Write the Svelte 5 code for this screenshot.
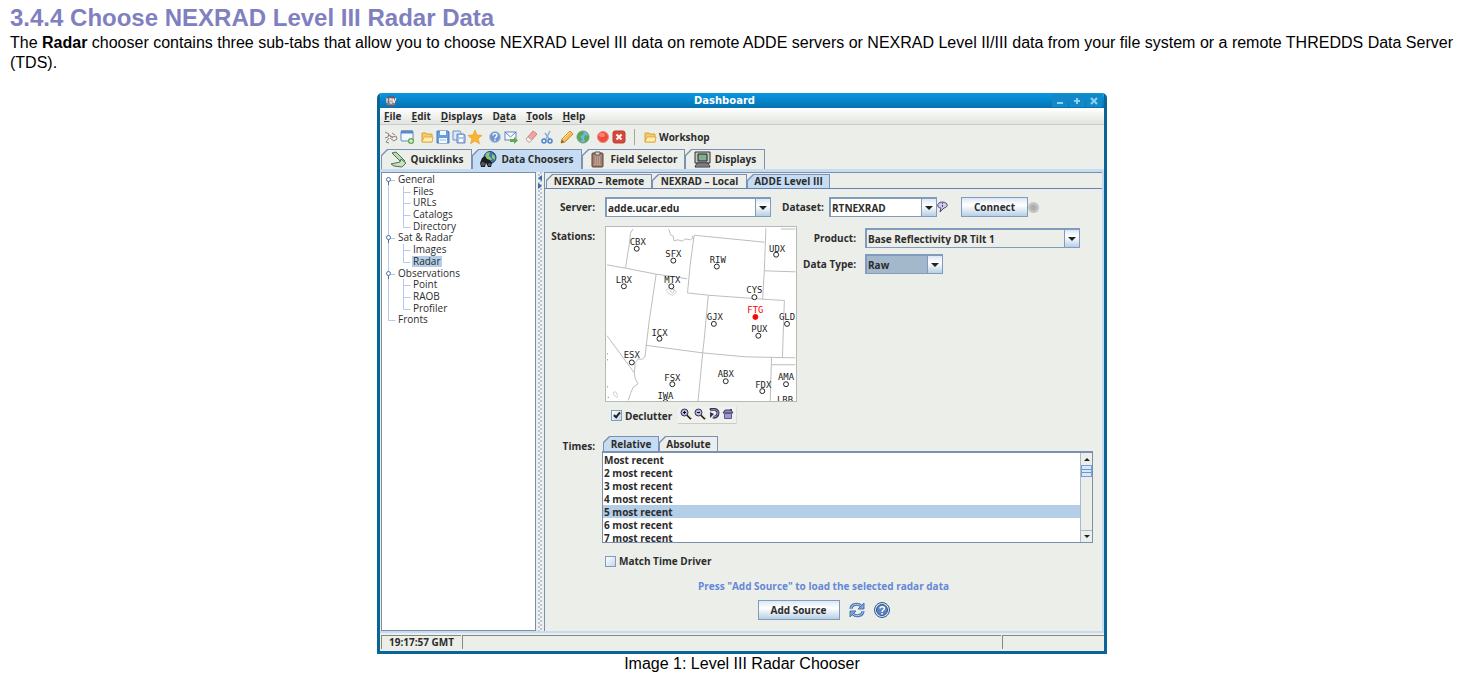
<script lang="ts">
  const menus = [
    ["", "F", "ile"],
    ["", "E", "dit"],
    ["", "D", "isplays"],
    ["D", "a", "ta"],
    ["", "T", "ools"],
    ["", "H", "elp"],
  ];

  const toolGroups = [
    ["satellite", "window"],
    ["open", "save", "saveas", "star"],
    ["help", "export"],
    ["eraser", "cut"],
    ["pencil", "globe"],
    ["record", "exit"],
  ];

  const mainTabs = [
    { icon: "links", label: "Quicklinks" },
    { icon: "choosers", label: "Data Choosers" },
    { icon: "clipboard", label: "Field Selector" },
    { icon: "monitor", label: "Displays" },
  ];

  const tree = [
    { label: "General", kind: "parent", first: true },
    { label: "Files", kind: "child" },
    { label: "URLs", kind: "child" },
    { label: "Catalogs", kind: "child" },
    { label: "Directory", kind: "child", last: true },
    { label: "Sat & Radar", kind: "parent" },
    { label: "Images", kind: "child" },
    { label: "Radar", kind: "child", last: true },
    { label: "Observations", kind: "parent" },
    { label: "Point", kind: "child" },
    { label: "RAOB", kind: "child" },
    { label: "Profiler", kind: "child", last: true },
    { label: "Fronts", kind: "leaf" },
  ];

  // label x/y, then marker x/y
  const stations: [string, number, number, number, number][] = [
    ["CBX", 32, 18, 31, 22],
    ["SFX", 68, 30, 68, 34],
    ["RIW", 113, 36, 112, 40],
    ["UDX", 173, 25, 172, 28],
    ["LRX", 18, 57, 18, 60],
    ["MTX", 67, 57, 66, 60],
    ["CYS", 150, 67, 150, 71],
    ["FTG", 151, 87, 151, 91],
    ["GJX", 110, 94, 109, 98],
    ["GLD", 183, 94, 183, 98],
    ["PUX", 155, 106, 154, 110],
    ["ICX", 54, 110, 54, 113],
    ["ESX", 26, 133, 26, 137],
    ["FSX", 67, 156, 67, 159],
    ["ABX", 121, 152, 121, 156],
    ["FDX", 159, 163, 158, 166],
    ["AMA", 182, 155, 182, 159],
    ["IWA", 60, 174, 60, 177],
    ["LBB", 181, 178, 181, 182],
  ];

  const times = [
    "Most recent",
    "2 most recent",
    "3 most recent",
    "4 most recent",
    "5 most recent",
    "6 most recent",
    "7 most recent",
  ];

  let activeTab = $state("Data Choosers");
  let activeChooser = $state("ADDE Level III");
  let activeNode = $state("Radar");
  let timeMode = $state("Relative");
  let selectedTime = $state("5 most recent");
  let station = $state("FTG");
  let declutter = $state(true);
  let matchDriver = $state(false);
</script>

{#snippet arrow()}
  <span class="arrow">
    <svg width="8" height="4" viewBox="0 0 8 4"><path d="M0 0h8L4 4z" fill="#222" /></svg>
  </span>
{/snippet}

{#snippet toolIcon(name: string)}
  <svg width="14" height="14" viewBox="0 0 14 14" fill="none">
    {#if name === "satellite"}
      <path d="M1 2l4 2-1 3-3 1M4 5l5 2 3-1 1 3-3 2-4-3M5 8l-3 4 3 1M8 3l3 2" stroke="#858585" />
      <path d="M6 6l3 2" stroke="#c66" />
    {:else if name === "window"}
      <rect x="1" y="1" width="12" height="10" rx="1" fill="#f4f8ff" stroke="#5d88c6" />
      <path d="M1 2h12" stroke="#5d88c6" stroke-width="3" />
      <circle cx="11" cy="11" r="3" fill="#5fa64c" />
      <path d="M9 11h4M11 9v4" stroke="#fff" />
    {:else if name === "open"}
      <path d="M2 3h4l1 1h5v8H2z" fill="#f6c96a" stroke="#dca23c" />
      <path d="M4 7h9l-1 5H2z" fill="#fff1b4" stroke="#e3ad43" />
    {:else if name === "save"}
      <path d="M1 1h11l1 1v11H1z" fill="#6a9ce0" stroke="#4a78bd" />
      <path d="M4 1h6v4H4zM3 8h8v5H3z" fill="#f4f8ff" />
      <path d="M4 10h6" stroke="#9bb7de" />
    {:else if name === "saveas"}
      <path d="M1 1h7l1 2v7H1z" fill="#dfe9fa" stroke="#6d90c8" />
      <path d="M5 4h7l1 1v8H5z" fill="#a9c4ec" stroke="#6587bf" />
      <path d="M7 5h4v2H7zM7 9h4v3H7z" fill="#fff" />
    {:else if name === "star"}
      <path d="M7 0l2 5 5 .4-4 3.3 1.5 5L7 11l-4.500 2.700L4 8.700 0 5.400 5 5z" fill="#f9b52e" stroke="#e8951c" stroke-width=".6" />
    {:else if name === "help"}
      <circle cx="7" cy="7" r="5.500" fill="#6f95cc" stroke="#b4c6e2" />
      <path d="M5 5.500C5 3 9 3 9 5.500 9 7 7 6.800 7 8.500M7 9.500V11" stroke="#fff" stroke-width="1.300" />
    {:else if name === "export"}
      <rect x="1" y="2" width="11" height="8" fill="#f5f8ff" stroke="#6485ba" />
      <path d="M1 2l5.500 5L12 2" stroke="#6485ba" />
      <path d="M6 9h4V7l4 3.500-4 3.500v-2H6z" fill="#62aa50" />
    {:else if name === "eraser"}
      <path d="M9 1l4 3-7 8-4-3z" fill="#f1a5a5" stroke="#d57d7d" />
      <path d="M4 7l4 3-2 2H4L2 9z" fill="#eee" stroke="#c6a9a9" />
    {:else if name === "cut"}
      <path d="M10 1L6 9M5 3l5 7" stroke="#8eaed5" stroke-width="1.500" />
      <circle cx="4" cy="11" r="2" stroke="#4b83cc" stroke-width="1.500" />
      <circle cx="10" cy="11" r="2" stroke="#4b83cc" stroke-width="1.500" />
    {:else if name === "pencil"}
      <path d="M10 1l3 3-8 8-4 1 1-4z" fill="#f8bc4d" stroke="#ce8b2b" />
      <path d="M3 9l7-7" stroke="#ffe6a4" />
      <path d="M1 13l1-3 2 2z" fill="#655" />
    {:else if name === "globe"}
      <circle cx="7" cy="7" r="6" fill="#7bb2df" stroke="#609a75" />
      <path d="M3 2l5 0-1 3-3 1 2 3-1 3-4-4zM9 5l4 1-1 5-3 1-1-4z" fill="#52ac50" />
    {:else if name === "record"}
      <circle cx="7" cy="7" r="5.500" fill="#f14b3d" stroke="#f2867c" />
      <ellipse cx="6" cy="5" rx="3" ry="2" fill="#f88377" />
    {:else if name === "exit"}
      <rect x="1" y="1" width="12" height="12" rx="2" fill="#d7483b" stroke="#bd3d33" />
      <path d="M4.500 4.500l5 5M9.500 4.500l-5 5" stroke="#fff" stroke-width="2" />
    {/if}
  </svg>
{/snippet}

{#snippet tabIcon(name: string)}
  <svg width="17" height="17" viewBox="0 0 17 17" fill="none">
    {#if name === "links"}
      <path d="M2 2l4-1 9 9-4 1z" fill="#b9dcb3" stroke="#50704f" />
      <path d="M1 13l9-2 1-3 5 4-4 4-8-1z" fill="#c6e2c1" stroke="#50704f" />
    {:else if name === "choosers"}
      <circle cx="10" cy="6.500" r="6" fill="#3b76b4" stroke="#23435e" />
      <path d="M6 2l4-1-1 4 3 3-3 3-4-5zM12 3l3 2v4l-3-2z" fill="#8cc474" />
      <path d="M2 7l3-2 2 3 3 1 2 3-1 4H8l-2-4-1 4H1L0 12z" fill="#1d1d20" />
      <circle cx="3" cy="13" r="2" fill="#53555e" />
      <circle cx="9.500" cy="13.500" r="1.500" fill="#4d5f66" />
    {:else if name === "clipboard"}
      <rect x="3" y="2" width="11" height="14" rx="1" fill="#a67b67" stroke="#5a4036" />
      <path d="M5 4h7v10H5z" fill="#bba193" />
      <path d="M5 6h7M5 8h7M5 10h7M5 12h7" stroke="#8d6b5d" stroke-dasharray="1 1" />
      <path d="M6 1h5v3H6z" fill="#d9d9d4" stroke="#555" />
    {:else if name === "monitor"}
      <path d="M1 1h15v11H1z" fill="#c8c8c4" stroke="#333" />
      <path d="M4 3h9v7H4z" fill="#7fae90" stroke="#222" />
      <path d="M3 12h11l2 4H1z" fill="#a9a2b3" stroke="#333" />
      <path d="M3 14h11" stroke="#555" />
    {/if}
  </svg>
{/snippet}

<main>
  <h1>3.4.4 Choose NEXRAD Level III Radar Data</h1>
  <p class="intro">
    The <b>Radar</b> chooser contains three sub-tabs that allow you to choose NEXRAD Level III data on
    remote ADDE servers or NEXRAD Level II/III data from your file system or a remote THREDDS Data
    Server (TDS).
  </p>

  <figure>
    <div class="window">
      <header class="titlebar">
        <svg class="logo" width="12" height="12" viewBox="0 0 12 12">
          <circle cx="6" cy="6" r="5.500" fill="#5c6474" />
          <path d="M1 5h10M2 9h8" stroke="#c69a84" stroke-width="1" />
          <path d="M2 3v5M5 3v5h2V4H5M8 3l1 5 2-5" stroke="#fff" fill="none" />
        </svg>
        <span class="title">Dashboard</span>
        <span class="controls">
          <button aria-label="Minimize"><svg width="8" height="8" viewBox="0 0 8 8"><path d="M1 6h6" /></svg></button>
          <button aria-label="Maximize"><svg width="8" height="8" viewBox="0 0 8 8"><path d="M1 4h6M4 1v6" /></svg></button>
          <button aria-label="Close"><svg width="8" height="8" viewBox="0 0 8 8"><path d="M1 1l6 6M7 1L1 7" /></svg></button>
        </span>
      </header>

      <nav class="menubar">
        {#each menus as [pre, key, post]}
          <button>{pre}<u>{key}</u>{post}</button>
        {/each}
      </nav>

      <div class="toolbar">
        {#each toolGroups as group}
          <div class="tool-group">
            {#each group as name}
              <button aria-label={name}>{@render toolIcon(name)}</button>
            {/each}
          </div>
        {/each}
        <span class="separator"></span>
        <button class="workshop">{@render toolIcon("open")}Workshop</button>
      </div>

      <div class="main-tabs">
        {#each mainTabs as tab}
          <button class="tab" class:active={activeTab === tab.label} onclick={() => (activeTab = tab.label)}>
            {@render tabIcon(tab.icon)}{tab.label}
          </button>
        {/each}
      </div>

      <div class="body">
        <div class="tree-panel">
          <ul class="tree">
            {#each tree as node}
              <li>
                <svg width={node.kind === "child" ? 30 : 15} height="12" viewBox="0 0 {node.kind === 'child' ? 30 : 15} 12" fill="none">
                  {#if node.kind === "parent"}
                    <path d={node.first ? "M6.500 6v6M8 6.500h5" : "M6.500 0v12M8 6.500h5"} stroke="#b3cbe8" />
                    <path d="M6.500 7v4" stroke="#4a6fae" />
                    <circle cx="6.500" cy="5.500" r="2" fill="#fff" stroke="#4a6fae" />
                  {:else if node.kind === "child"}
                    <path d="M6.500 0v12" stroke="#b3cbe8" />
                    <path d={node.last ? "M21.500 0v6.500h7" : "M21.500 0v12M21.500 6.500h7"} stroke="#b3cbe8" />
                  {:else}
                    <path d="M6.500 0v6.500h7" stroke="#b3cbe8" />
                  {/if}
                </svg>
                <button class:selected={activeNode === node.label} onclick={() => (activeNode = node.label)}>{node.label}</button>
              </li>
            {/each}
          </ul>
        </div>

        <div class="divider">
          <svg width="4" height="16" viewBox="0 0 4 16"><path d="M4 1v6L0 4zM0 9v6l4-3z" fill="#4468ac" /></svg>
        </div>

        <section class="chooser">
          <div class="sub-tabs">
            {#each ["NEXRAD – Remote", "NEXRAD – Local", "ADDE Level III"] as label}
              <button class="tab" class:active={activeChooser === label} onclick={() => (activeChooser = label)}>{label}</button>
            {/each}
          </div>

          <div class="form">
            <label class="name" for="server">Server:</label>
            <div class="row">
              <span class="combo server">
                <select id="server"><option>adde.ucar.edu</option></select>
                {@render arrow()}
              </span>
              <label for="dataset">Dataset:</label>
              <span class="combo dataset">
                <select id="dataset"><option>RTNEXRAD</option></select>
                {@render arrow()}
              </span>
              <svg class="bubble" width="11" height="12" viewBox="0 0 11 12">
                <path d="M5 1C0 1-1 7 4 7l-1 4 4-4c5-1 4-6-2-6z" fill="#cfc9ee" stroke="#4b4b61" />
                <path d="M5.500 2v1M5.500 4v2" stroke="#504b85" />
              </svg>
              <button class="push connect">Connect</button>
              <svg width="11" height="11" viewBox="0 0 11 11">
                <circle cx="5.500" cy="5.500" r="5.500" fill="#c4c4c2" />
                <circle cx="5.500" cy="5.500" r="3" fill="#adadab" />
              </svg>
            </div>

            <span class="name stations-name">Stations:</span>
            <div class="stations">
              <div>
                <svg class="map" width="192" height="176" viewBox="0 0 192 176">
                  <svg width="192" height="176" viewBox="15 18 576 528">
                    <g fill="none" stroke="#bcbcbc" stroke-width="3">
                      <path d="M97 24l-8 12-3 30-12 76M18 133l56 10 93 18 94 14M205 25l6 17 8 4 2 14 12-3 14 4 8-7 16 3 6-4v-8" />
                      <path d="M495 64L282 43l-12 92-8 83 63 7 164 12 67 4-6 175M500 22l-5 130-5 85M495 151l95 3M545 24h45" />
                      <path d="M167 161l-22 148-12 103-10 8-10-2-10 12-2 30M325 226l-12 130-5 45-8 85-6 60M135 377l173 23 130 12 151 3M517 414l-4 132M517 436h72M18 348l82 112 4 20 8 14-15 10-8 20-7 20" />
                      <path d="M197 190l14 8 10 12 8 4-12 12-12-6-8-10 12-12M205 206l12 14 6-14-14 4M36 520l8-2 6 12-3 6-8-8z" stroke-width="2" />
                      <path d="M18 403h3M18 421h3M18 503h3M20 535h3" stroke="#777" />
                    </g>
                  </svg>
                  {#each stations as [name, lx, ly, x, y]}
                    <g class="station" class:picked={station === name}>
                      <text x={lx} y={ly}>{name}</text>
                      <circle cx={x} cy={y} r="2.500" />
                    </g>
                  {/each}
                </svg>
                <div class="map-tools">
                  <label class="check"><input type="checkbox" bind:checked={declutter} />Declutter</label>
                  <div class="zoom-tools">
                    <button aria-label="Zoom in"><svg width="12" height="12" viewBox="0 0 12 12"><path d="M7 7l4 4" stroke="#222" stroke-width="2" /><path d="M8 7l3 3" stroke="#d7b258" /><circle cx="4.500" cy="4.500" r="3.500" fill="#b9b5df" stroke="#34344e" /><path d="M3 4.500h3M4.500 3v3" stroke="#111" /></svg></button>
                    <button aria-label="Zoom out"><svg width="12" height="12" viewBox="0 0 12 12"><path d="M7 7l4 4" stroke="#222" stroke-width="2" /><path d="M8 7l3 3" stroke="#d7b258" /><circle cx="4.500" cy="4.500" r="3.500" fill="#b9b5df" stroke="#34344e" /><path d="M3 4.500h3" stroke="#111" /></svg></button>
                    <button aria-label="Reset"><svg width="12" height="12" viewBox="0 0 12 12" fill="none"><path d="M2 2c4-2 8 0 8 3s-3 5-5 4" stroke="#34344e" stroke-width="3" /><path d="M3 2c4-1 7 0 7 3s-3 4-5 4" stroke="#a9a6d8" /><path d="M2 4l4 2-4 4z" fill="#34344e" /></svg></button>
                    <button aria-label="Home"><svg width="12" height="12" viewBox="0 0 12 12"><path d="M8 1h2v2H8z" fill="#3d3d5c" /><path d="M1 5l2-3h6l2 3z" fill="#8c8ac4" stroke="#3d3d5c" /><path d="M2.500 5.500h7v5h-7z" fill="#9d9bcd" stroke="#5a598c" /></svg></button>
                  </div>
                </div>
              </div>
              <div class="product-form">
                <label for="product">Product:</label>
                <span class="combo product">
                  <select id="product"><option>Base Reflectivity DR Tilt 1</option></select>
                  {@render arrow()}
                </span>
                <label for="datatype">Data Type:</label>
                <span class="combo datatype">
                  <select id="datatype"><option>Raw</option></select>
                  {@render arrow()}
                </span>
              </div>
            </div>

            <label class="name times-name" for="times">Times:</label>
            <div class="times">
              <div class="time-tabs">
                {#each ["Relative", "Absolute"] as label}
                  <button class="tab" class:active={timeMode === label} onclick={() => (timeMode = label)}>{label}</button>
                {/each}
              </div>
              <div class="list">
                <select id="times" size="7" bind:value={selectedTime}>
                  {#each times as time}
                    <option value={time}>{time}</option>
                  {/each}
                </select>
                <div class="scrollbar">
                  <button aria-label="Scroll up"><svg width="6" height="3" viewBox="0 0 6 3"><path d="M0 3h6L3 0z" fill="#222" /></svg></button>
                  <span class="thumb"></span>
                  <button class="down" aria-label="Scroll down"><svg width="6" height="3" viewBox="0 0 6 3"><path d="M0 0h6L3 3z" fill="#222" /></svg></button>
                </div>
              </div>
              <label class="check driver"><input type="checkbox" bind:checked={matchDriver} />Match Time Driver</label>
            </div>
          </div>

          <p class="hint">Press "Add Source" to load the selected radar data</p>
          <div class="actions">
            <button class="push add">Add Source</button>
            <button aria-label="Refresh">
              <svg width="16" height="16" viewBox="0 0 16 16" fill="none">
                <path d="M2 7c0-5 7-6 10-3M14 9c0 5-7 6-10 3" stroke="#4872b2" stroke-width="3" />
                <path d="M2 7c0-5 7-6 10-3M14 9c0 5-7 6-10 3" stroke="#b9d0ef" />
                <path d="M15 1v6H9zM1 15V9h6z" fill="#7fa3d8" stroke="#4872b2" />
              </svg>
            </button>
            <button aria-label="Help">
              <svg width="16" height="16" viewBox="0 0 16 16" fill="none">
                <circle cx="8" cy="8" r="7.500" fill="#dce7f6" stroke="#31568f" />
                <circle cx="8" cy="8" r="5.500" fill="#5d84bf" stroke="#31568f" />
                <path d="M6 6.500C6 4 10.500 4 10.500 6.500 10.500 8 8 8 8 10M8 11v1.500" stroke="#fff" stroke-width="1.500" />
              </svg>
            </button>
          </div>
        </section>
      </div>

      <footer class="status">
        <span class="clock">19:17:57 GMT</span>
        <span></span>
        <span></span>
      </footer>
    </div>
    <figcaption>Image 1: Level III Radar Chooser</figcaption>
  </figure>
</main>

<style>
  :global(body) {
    background: #fff;
  }

  main {
    padding: 4px 10px 0;
    font: 16px/20px "Liberation Sans", Arial, sans-serif;
    color: #000;
  }

  h1 {
    margin: 0;
    font-size: 24px;
    line-height: 28px;
    color: #8080c0;
  }

  .intro {
    margin: 1px 0 0;
  }

  figure {
    margin: 20px 0 0;
    padding-left: 17px;
  }

  figcaption {
    text-align: center;
  }

  button,
  select,
  input {
    margin: 0;
    padding: 0;
    border: 0;
    border-radius: 0;
    background: none;
    font: inherit;
    color: inherit;
    appearance: none;
    outline: none;
  }

  svg {
    display: block;
    flex: none;
  }

  .window {
    box-sizing: border-box;
    width: 100%;
    max-width: 730px;
    margin: 0 auto;
    overflow: hidden;
    border: solid #0b6496;
    border-width: 0 3px 3px;
    border-radius: 5px 5px 0 0;
    background: #eceeea;
    font: bold 10px/12px "Open Sans", "Noto Sans", sans-serif;
    color: #2c2c2c;
  }

  .titlebar {
    display: grid;
    grid-template-columns: 12px 1fr 50px;
    align-items: center;
    height: 15px;
    padding: 0 2px 0 5px;
    background: linear-gradient(#0798e4, #0672b0);
  }

  .title {
    text-align: center;
    font-family: "DejaVu Sans", sans-serif;
    color: #fff;
  }

  .controls {
    display: flex;
    justify-content: flex-end;
    gap: 1px;
  }

  .controls button {
    display: grid;
    place-items: center;
    width: 16px;
    height: 13px;
    background: #1388c9;
  }

  .controls path {
    fill: none;
    stroke: #8fd0f2;
    stroke-width: 2;
  }

  .menubar {
    display: flex;
    gap: 10px;
    height: 16px;
    padding: 0 4px;
    border-bottom: 1px solid #c9cdc9;
    background: linear-gradient(#fff, #e2e4df);
  }

  .toolbar {
    display: flex;
    align-items: center;
    gap: 6px;
    height: 24px;
    padding-left: 4px;
  }

  .tool-group {
    display: flex;
    gap: 2px;
  }

  .separator {
    width: 1px;
    height: 16px;
    margin: 0 2px;
    background: #a4a7a4;
  }

  .workshop {
    display: flex;
    align-items: center;
    gap: 2px;
  }

  .tab {
    position: relative;
    isolation: isolate;
    background: #7b90b2;
    clip-path: polygon(6px 0, 100% 0, 100% 100%, 0 100%, 0 6px);
    white-space: nowrap;
  }

  .tab::before {
    content: "";
    position: absolute;
    inset: 1px 1px 0;
    z-index: -1;
    background: #eceeea;
    clip-path: polygon(6px 0, 100% 0, 100% 100%, 0 100%, 0 6px);
  }

  .tab.active::before {
    background: #c6dcf2;
  }

  .main-tabs {
    display: grid;
    grid-template-columns: 91px 110px 103px 80px;
    height: 20px;
    padding-left: 1px;
    border-bottom: 3px solid #c6dcf2;
  }

  .main-tabs .tab {
    display: flex;
    align-items: center;
    justify-content: center;
    gap: 4px;
  }

  .body {
    display: flex;
    height: 459px;
    padding-left: 1px;
    border: solid #c6dcf2;
    border-width: 0 2px 2px 0;
  }

  .tree-panel {
    box-sizing: border-box;
    width: 155px;
    border: 1px solid #7b8fa8;
    background: #fff;
    font-weight: normal;
  }

  .tree {
    display: grid;
    grid-template-rows: repeat(13, minmax(0, 1fr));
    height: 152px;
    margin: 1px 0 0;
    padding: 0;
    list-style: none;
  }

  .tree li {
    display: flex;
    align-items: flex-start;
    min-height: 0;
  }

  .tree button {
    padding: 0 1px;
    line-height: 11px;
  }

  .tree .selected {
    background: #b4cee7;
  }

  .divider {
    width: 4px;
    margin: 0 2px;
    padding-top: 2px;
    background: repeating-conic-gradient(#b9c6d8 0 25%, #f2f4f4 0 50%) 0 0 / 4px 4px;
  }

  .chooser {
    flex: 1;
    min-width: 0;
    border: solid #7b8fa8;
    border-width: 1px 0 0 1px;
  }

  .sub-tabs {
    display: grid;
    grid-template-columns: 106px 95px 83px;
    height: 14px;
    padding: 1px 0 0 1px;
    border-bottom: 1px solid #6582b6;
  }

  .form {
    display: grid;
    grid-template-columns: 50px 1fr;
    column-gap: 7px;
    padding: 8px 9px 0 0;
  }

  .name {
    padding-top: 4px;
    text-align: right;
  }

  .row {
    display: flex;
    align-items: center;
    width: 434px;
    padding-left: 3px;
  }

  .combo {
    display: grid;
    grid-template-columns: 1fr 15px;
    box-sizing: border-box;
    height: 20px;
    border: 2px solid #819bbd;
    border-width: 2px 1px 1px 2px;
    background: #fff;
  }

  .combo select {
    grid-area: 1 / 1 / 2 / 3;
    min-width: 0;
    padding-left: 1px;
  }

  .arrow {
    grid-area: 1 / 2;
    display: grid;
    place-items: center;
    border-left: 1px solid #819bbd;
    background: linear-gradient(#dce8f5, #fff 40%, #b8cfe5);
    pointer-events: none;
  }

  .server {
    width: 166px;
    margin-right: 11px;
  }

  .dataset {
    width: 108px;
    margin-left: auto;
  }

  .bubble {
    margin-right: 13px;
  }

  .push {
    box-sizing: border-box;
    height: 20px;
    border: 1px solid #819bbd;
    background: linear-gradient(#dce8f5, #fff 40%, #b8cfe5);
  }

  .connect {
    width: 67px;
  }

  .stations-name,
  .stations {
    margin-top: 9px;
  }

  .stations {
    display: flex;
    gap: 7px;
    padding-left: 3px;
  }

  .map {
    box-sizing: border-box;
    border: 1px solid #b6bab6;
    background: #fff;
  }

  .station text {
    font: 9px "DejaVu Sans Mono", monospace;
    text-anchor: middle;
    fill: #222;
  }

  .station circle {
    fill: #fff;
    stroke: #222;
  }

  .station.picked text {
    fill: #f00;
  }

  .station.picked circle {
    fill: #f00;
    stroke: #f00;
  }

  .map-tools {
    display: flex;
    align-items: center;
    gap: 6px;
    padding: 5px 0 0 6px;
  }

  .check {
    display: flex;
    align-items: center;
    gap: 3px;
    width: max-content;
  }

  .check input {
    box-sizing: border-box;
    width: 11px;
    height: 11px;
    border: 1px solid #819bbd;
    background: linear-gradient(135deg, #fff, #c4d7eb);
  }

  .check input:checked::after {
    content: "";
    display: block;
    width: 2px;
    height: 5px;
    margin: 0 0 0 3px;
    border: solid #222;
    border-width: 0 2px 2px 0;
    transform: rotate(40deg);
  }

  .zoom-tools {
    display: flex;
    gap: 2px;
    padding: 1px 2px 3px;
    border-bottom: 1px solid #c9cbc8;
    border-right: 1px solid #dcdedb;
    background: #f1f2ef;
  }

  .product-form {
    display: grid;
    grid-template-columns: 52px max-content;
    gap: 6px 9px;
    align-content: start;
    align-items: center;
    justify-items: start;
    padding-top: 2px;
  }

  .product-form label {
    justify-self: end;
    white-space: nowrap;
  }

  .product {
    width: 215px;
    background: #eceeea;
  }

  .datatype {
    width: 78px;
    background: #a3b8cb;
  }

  .times-name,
  .times {
    margin-top: 12px;
  }

  .time-tabs {
    display: grid;
    grid-template-columns: 56px 59px;
    height: 15px;
    padding-left: 1px;
  }

  .list {
    display: flex;
    box-sizing: border-box;
    height: 92px;
    border: 1px solid #7b8fa8;
    border-top: 2px solid #7b90b2;
    background: #fff;
  }

  .list select {
    flex: 1;
    height: 89px;
    overflow: hidden;
  }

  .list option {
    height: 13px;
    min-height: 13px;
    padding: 0 1px;
    overflow: hidden;
    font-weight: bold;
    line-height: 13px;
  }

  .list option:checked {
    background: linear-gradient(#b4cee7, #b4cee7);
    color: #2c2c2c;
  }

  .scrollbar {
    display: flex;
    flex-direction: column;
    width: 11px;
    border-left: 1px solid #a9bacd;
    background: #eceeea;
  }

  .scrollbar button {
    display: grid;
    place-items: center;
    height: 12px;
  }

  .scrollbar .down {
    margin-top: auto;
    border-top: 1px solid #a9bacd;
  }

  .thumb {
    height: 10px;
    border: 1px solid #7c9fd3;
    background: linear-gradient(#d8e7fa 3px, #6f95cf 3px 4px, #d8e7fa 4px 6px, #6f95cf 6px 7px, #d8e7fa 7px);
  }

  .driver {
    margin-top: 12px;
    padding-left: 3px;
  }

  .hint {
    margin: 13px 0 0;
    text-align: center;
    line-height: 13px;
    color: #6488d8;
  }

  .actions {
    display: flex;
    align-items: center;
    justify-content: center;
    gap: 9px;
    margin-top: 7px;
  }

  .add {
    width: 82px;
  }

  .status {
    display: grid;
    grid-template-columns: 80px 1fr 102px;
    gap: 1px;
    height: 14px;
    padding: 2px 0 2px 1px;
  }

  .status span {
    border: solid #858a86;
    border-width: 1px 0 0 1px;
  }

  .clock {
    text-align: center;
  }
</style>
